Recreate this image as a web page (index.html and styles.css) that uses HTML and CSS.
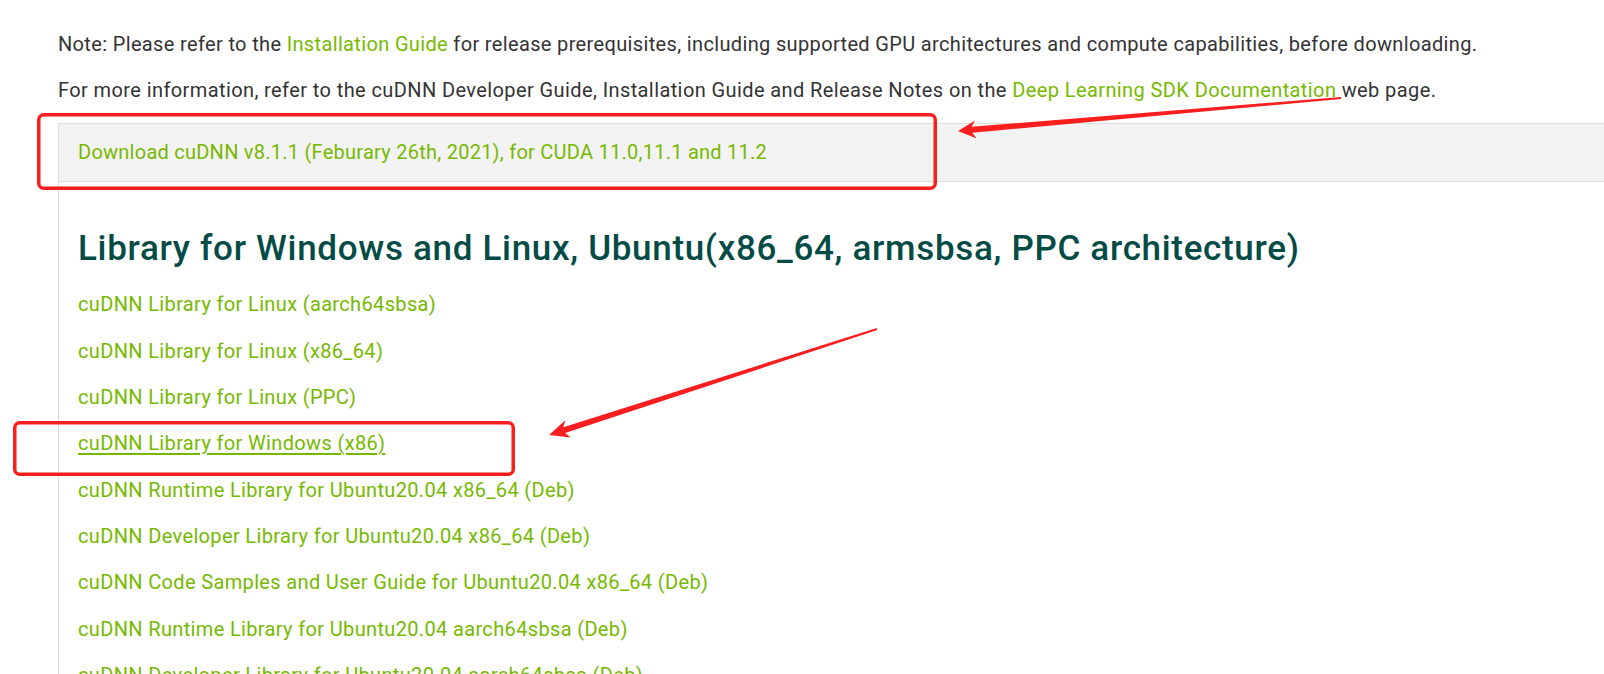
FILE: index.html
```html
<!DOCTYPE html>
<html lang="en">
<head>
<meta charset="utf-8">
<title>cuDNN Download</title>
<link rel="stylesheet" href="styles.css">
</head>
<body>
<main class="page">
  <p class="note">Note: Please refer to the <a class="inline-link" href="#">Installation Guide</a> for release prerequisites, including supported GPU architectures and compute capabilities, before downloading.</p>
  <p class="note note-wide">For more information, refer to the cuDNN Developer Guide, Installation Guide and Release Notes on the <a class="inline-link" href="#">Deep Learning SDK Documentation</a> web page.</p>

  <section class="panel">
    <div class="panel-head">
      <a class="panel-title" href="#">Download cuDNN v8.1.1 (Feburary 26th, 2021), for CUDA 11.0,11.1 and 11.2</a>
    </div>
    <div class="panel-body">
      <h2 class="section-title">Library for Windows and Linux, Ubuntu(x86_64, armsbsa, PPC architecture)</h2>
      <ul class="downloads">
        <li><a href="#">cuDNN Library for Linux (aarch64sbsa)</a></li>
        <li><a href="#">cuDNN Library for Linux (x86_64)</a></li>
        <li><a href="#">cuDNN Library for Linux (PPC)</a></li>
        <li><a class="hovered" href="#">cuDNN Library for Windows (x86)</a></li>
        <li><a href="#">cuDNN Runtime Library for Ubuntu20.04 x86_64 (Deb)</a></li>
        <li><a href="#">cuDNN Developer Library for Ubuntu20.04 x86_64 (Deb)</a></li>
        <li><a href="#">cuDNN Code Samples and User Guide for Ubuntu20.04 x86_64 (Deb)</a></li>
        <li><a href="#">cuDNN Runtime Library for Ubuntu20.04 aarch64sbsa (Deb)</a></li>
        <li><a href="#">cuDNN Developer Library for Ubuntu20.04 aarch64sbsa (Deb)</a></li>
        <li><a href="#">cuDNN Code Samples and User Guide for Ubuntu20.04 aarch64sbsa (Deb)</a></li>
      </ul>
    </div>
  </section>
</main>

<svg class="annotations" width="1604" height="674" viewBox="0 0 1604 674" aria-hidden="true">
  <rect class="mark" x="38.75" y="114.75" width="896.5" height="73.5" rx="5" ry="5"/>
  <rect class="mark" x="14.75" y="422.75" width="498.5" height="51.5" rx="5" ry="5"/>
  <polygon class="arrow" points="958,131 975.1,120.4 971.6,126.8 1340.9,97 1341.1,99 972.2,132.8 976.7,138.4"/>
  <polygon class="arrow" points="549,435 565.3,420.3 563.3,427.2 876.7,328 877.3,330 565.1,433 570.8,437.4"/>
</svg>
</body>
</html>
```

FILE: styles.css
```css
html, body {
  margin: 0;
  padding: 0;
  overflow: hidden;
  background: #ffffff;
}

body {
  font-family: Roboto, "Noto Sans", "DejaVu Sans", sans-serif;
  font-size: 20px;
  letter-spacing: 0.35px;
  color: #333333;
  position: relative;
  width: 1604px;
  height: 674px;
}

a {
  color: #76b900;
  text-decoration: none;
}

.page {
  padding: 31px 0 0 58px;
}

.note {
  margin: 0 0 20.33px 0;
  line-height: 26px;
}

.note-wide {
  letter-spacing: 0.4px;
}

.panel {
  margin-top: -0.33px;
  border-left: 1px solid #dddddd;
}

.panel-head {
  background: #f3f3f3;
  border-top: 1px solid #dddddd;
  border-bottom: 1px solid #dddddd;
  padding: 14.5px 19px 16.5px 19px;
  line-height: 26px;
}

.panel-title {
  letter-spacing: 0.25px;
}

.panel-body {
  padding: 46.5px 19px 0 19px;
}

.section-title {
  margin: 0 0 22.5px 0;
  font-size: 35px;
  line-height: 40px;
  letter-spacing: 0.68px;
  font-weight: 500;
  color: #034c46;
}

.downloads {
  list-style: none;
  margin: 0;
  padding: 0;
}

.downloads li {
  line-height: 26px;
  margin-bottom: 20.33px;
}

.downloads a.hovered {
  text-decoration: underline;
  text-decoration-thickness: 2px;
  text-underline-offset: 3px;
}

.annotations {
  position: absolute;
  left: 0;
  top: 0;
  pointer-events: none;
}

.mark {
  fill: none;
  stroke: #fb1e1e;
  stroke-width: 3.5;
}

.arrow {
  fill: #fb1e1e;
}
```
